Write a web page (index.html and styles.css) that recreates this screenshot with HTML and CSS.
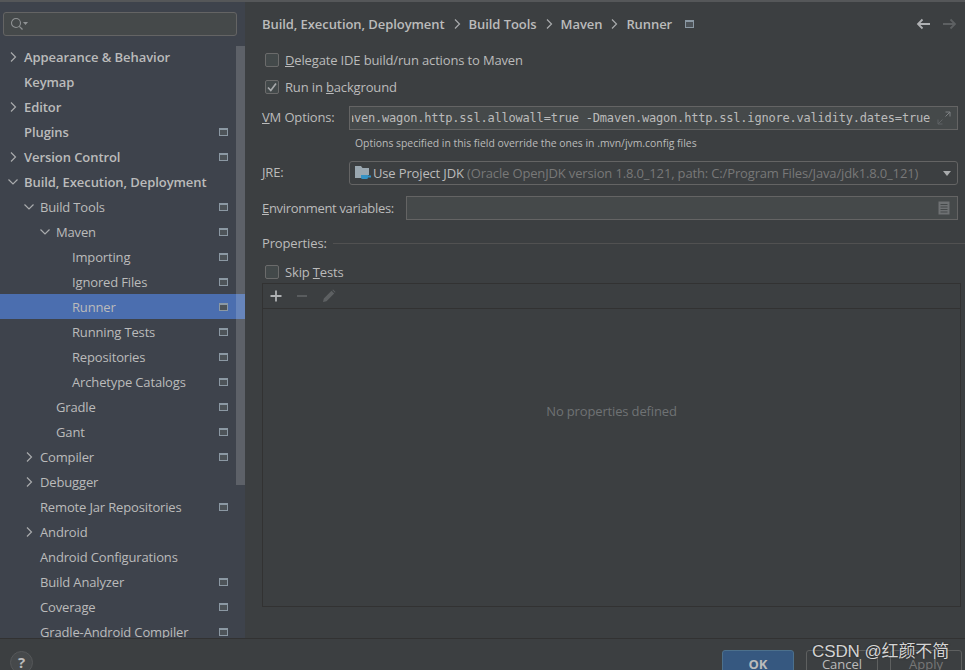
FILE: index.html
```html
<!DOCTYPE html>
<html lang="en">
<head>
    <meta charset="UTF-8">
    <title>Settings</title>
    <link rel="stylesheet" href="styles.css">
</head>
<body>

<svg class="defs" width="0" height="0">
    <symbol id="right" viewBox="0 0 10 12"><path d="M3 1.500 7.500 6 3 10.500" fill="none" stroke="#a9abad" stroke-width="1.200"/></symbol>
    <symbol id="down" viewBox="0 0 12 10"><path d="M1.500 2.500 6 7l4.500-4.500" fill="none" stroke="#a9abad" stroke-width="1.200"/></symbol>
</svg>

<div class="main">
    <div class="sidebar">
        <div class="search">
            <svg width="20" height="16" viewBox="0 0 20 16"><circle cx="7" cy="7" r="4.500" fill="none" stroke="#8f9294" stroke-width="1.100"/><path d="M10.300 10.300 13.500 13.500" stroke="#8f9294" stroke-width="1.200"/><path d="M14 6h5l-2.500 3z" fill="#8f9294"/></svg>
        </div>
        <div class="scrollbar"></div>
        <ul class="tree">
            <li class="row"><svg class="arrow"><use href="#right"/></svg><span class="bold">Appearance &amp; Behavior</span></li>
            <li class="row"><span class="bold">Keymap</span></li>
            <li class="row"><svg class="arrow"><use href="#right"/></svg><span class="bold">Editor</span></li>
            <li class="row"><span class="bold">Plugins</span><i class="proj"></i></li>
            <li class="row"><svg class="arrow"><use href="#right"/></svg><span class="bold">Version Control</span><i class="proj"></i></li>
            <li class="row"><svg class="arrow"><use href="#down"/></svg><span class="bold">Build, Execution, Deployment</span></li>
            <li class="row lv1"><svg class="arrow"><use href="#down"/></svg><span>Build Tools</span><i class="proj"></i></li>
            <li class="row lv2"><svg class="arrow"><use href="#down"/></svg><span>Maven</span><i class="proj"></i></li>
            <li class="row lv3"><span>Importing</span><i class="proj"></i></li>
            <li class="row lv3"><span>Ignored Files</span><i class="proj"></i></li>
            <li class="row lv3 selected"><span>Runner</span><i class="proj"></i></li>
            <li class="row lv3"><span>Running Tests</span><i class="proj"></i></li>
            <li class="row lv3"><span>Repositories</span><i class="proj"></i></li>
            <li class="row lv3"><span>Archetype Catalogs</span><i class="proj"></i></li>
            <li class="row lv2"><span>Gradle</span><i class="proj"></i></li>
            <li class="row lv2"><span>Gant</span><i class="proj"></i></li>
            <li class="row lv1"><svg class="arrow"><use href="#right"/></svg><span>Compiler</span><i class="proj"></i></li>
            <li class="row lv1"><svg class="arrow"><use href="#right"/></svg><span>Debugger</span></li>
            <li class="row lv1"><span>Remote Jar Repositories</span><i class="proj"></i></li>
            <li class="row lv1"><svg class="arrow"><use href="#right"/></svg><span>Android</span></li>
            <li class="row lv1"><span>Android Configurations</span></li>
            <li class="row lv1"><span>Build Analyzer</span><i class="proj"></i></li>
            <li class="row lv1"><span>Coverage</span><i class="proj"></i></li>
            <li class="row lv1"><span>Gradle-Android Compiler</span><i class="proj"></i></li>
        </ul>
    </div>

    <div class="content">
        <div class="crumbs">
            <span>Build, Execution, Deployment</span>
            <svg class="sep"><use href="#right"/></svg>
            <span>Build Tools</span>
            <svg class="sep"><use href="#right"/></svg>
            <span>Maven</span>
            <svg class="sep"><use href="#right"/></svg>
            <span>Runner</span>
            <i class="proj"></i>
            <div class="nav">
                <svg width="14" height="12" viewBox="0 0 14 12"><path d="M14 6H2M6.500 1.500 2 6l4.500 4.500" fill="none" stroke="#afb1b3" stroke-width="1.800"/></svg>
                <svg width="14" height="12" viewBox="0 0 14 12"><path d="M0 6h12M7.500 1.500 12 6l-4.500 4.500" fill="none" stroke="#5d6062" stroke-width="1.800"/></svg>
            </div>
        </div>

        <label class="check first"><i class="box"></i><span><u>D</u>elegate IDE build/run actions to Maven</span></label>
        <label class="check second">
            <i class="box"><svg width="14" height="14" viewBox="0 0 14 14"><path d="M3 7.500 5.800 10.500 11 3.500" fill="none" stroke="#a7a9ab" stroke-width="1.700"/></svg></i>
            <span>Run in <u>b</u>ackground</span>
        </label>

        <div class="field vm">
            <span class="label"><u>V</u>M Options:</span>
            <div class="input mono">
                <span class="clip"><span>-Dmaven.wagon.http.ssl.allowall=true -Dmaven.wagon.http.ssl.ignore.validity.dates=true</span></span>
                <svg width="14" height="14" viewBox="0 0 14 14"><path d="M8.500 1h4.500v4.500M13 1 8.500 5.500" fill="none" stroke="#7e8183" stroke-width="1"/><path d="M5.500 13H1V8.500M1 13l4.500-4.500" fill="none" stroke="#5f6264" stroke-width="1"/></svg>
            </div>
        </div>
        <div class="hint">Options specified in this field override the ones in .mvn/jvm.config files</div>

        <div class="field jre">
            <span class="label"><u>J</u>RE:</span>
            <div class="select">
                <svg width="16" height="16" viewBox="0 0 16 16"><path d="M0 1h6l1.500 2H14v7H9.500v3H0z" fill="#9aa7b0"/><path d="M6 10h7v2.500a1.500 1.500 0 0 1-1.500 1.500h-4A1.500 1.500 0 0 1 6 12.500zM13 10.500h3v2h-3z" fill="#3592c4"/></svg>
                <span class="val">Use Project JDK <em>(Oracle OpenJDK version 1.8.0_121, path: C:/Program Files/Java/jdk1.8.0_121)</em></span>
                <i class="caret"></i>
            </div>
        </div>

        <div class="field env">
            <span class="label"><u>E</u>nvironment variables:</span>
            <div class="input">
                <svg class="doc" width="12" height="14" viewBox="0 0 12 14"><path d="M0.500 0.500h11v13H.5z" fill="#6e7173"/><path d="M2.500 3.500h7M2.500 6h7M2.500 8.500h7M2.500 11h7" stroke="#45494a" stroke-width="1"/></svg>
            </div>
        </div>

        <div class="title"><span>Properties:</span><div class="line"></div></div>

        <label class="check skip"><i class="box"></i><span>Skip <u>T</u>ests</span></label>

        <div class="table">
            <div class="toolbar">
                <svg width="12" height="12" viewBox="0 0 12 12"><path d="M6 .5v11M.5 6h11" stroke="#afb1b3" stroke-width="1.800"/></svg>
                <svg width="12" height="12" viewBox="0 0 12 12"><path d="M1 6h10" stroke="#5d6062" stroke-width="1.800"/></svg>
                <svg width="14" height="14" viewBox="0 0 14 14"><path d="M1 13l.8-3.500L9.500 1.800l2.700 2.700-7.700 7.700zM10.300 1l.8-.5 2.400 2.400-.5.8z" fill="#5d6062"/></svg>
            </div>
            <div class="empty">No properties defined</div>
        </div>
    </div>
</div>

<div class="footer">
    <div class="help">?</div>
    <div class="buttons">
        <button class="btn ok">OK</button>
        <button class="btn">Cancel</button>
        <button class="btn off">Apply</button>
    </div>
</div>

<div class="mark">CSDN @红颜不简</div>

</body>
</html>
```
FILE: styles.css
```css
* {
    box-sizing: border-box;
}
html, body {
    margin: 0;
    height: 670px;
    overflow: hidden;
}
body {
    position: relative;
    background-color: #3c3f41;
    color: #bbbbbb;
    font-family: "Open Sans", "Noto Sans", sans-serif;
    font-size: 13px;
    letter-spacing: -0.15px;
    border-top: 2px solid #555759;
}
.defs {
    position: absolute;
}
.main {
    display: flex;
    height: 637px;
    border-bottom: 1px solid #323232;
}

/* left tree */
.sidebar {
    position: relative;
    width: 245px;
    flex: none;
    background-color: #3e434c;
    overflow: hidden;
}
.search {
    display: flex;
    align-items: center;
    margin: 10px 8px 8px 3px;
    height: 24px;
    padding-left: 5px;
    background-color: #45494a;
    border: 1px solid #646464;
    border-radius: 3px;
}
.scrollbar {
    position: absolute;
    left: 236px;
    top: 44px;
    z-index: 1;
    width: 9px;
    height: 439px;
    background-color: rgba(255,255,255,0.16);
}
.tree {
    list-style: none;
    margin: 0;
    padding: 0;
}
.row {
    display: flex;
    align-items: center;
    height: 25px;
    padding: 0 17px 0 24px;
    position: relative;
    white-space: nowrap;
}
.row .proj {
    margin-left: auto;
}
.lv1 { padding-left: 40px; }
.lv2 { padding-left: 56px; }
.lv3 { padding-left: 72px; }
.bold {
    font-weight: 600;
    letter-spacing: -0.07px;
}
.arrow {
    position: absolute;
    width: 12px;
    height: 12px;
    margin-left: -17px;
}
.selected {
    background-color: #4b6eaf;
}
.proj {
    display: block;
    width: 9px;
    height: 8px;
    flex: none;
    border: 1px solid #8b98a3;
    border-top-width: 2px;
    background-color: #4d5358;
}

/* right panel */
.content {
    flex: 1;
    padding: 0 7px 0 17px;
    min-width: 0;
    position: relative;
}
.crumbs {
    display: flex;
    align-items: center;
    height: 24px;
    margin-top: 10px;
    font-weight: 600;
    letter-spacing: -0.07px;
    white-space: nowrap;
}
.sep {
    width: 12px;
    height: 12px;
    margin: 0 6px;
}
.crumbs .proj {
    margin-left: 13px;
}
.nav {
    display: flex;
    gap: 13px;
    margin-left: auto;
    margin-right: 1px;
}
.check {
    display: flex;
    align-items: center;
    height: 22px;
    margin-left: 3px;
    gap: 6px;
}
.check.first {
    margin-top: 13px;
}
.check.second {
    margin-top: 5px;
}
.box {
    display: flex;
    width: 14px;
    height: 14px;
    background-color: #43494a;
    border: 1px solid #6b6b6b;
    border-radius: 2px;
    align-items: center;
    justify-content: center;
}
.box svg {
    flex: none;
}
.field {
    display: flex;
    align-items: center;
    height: 24px;
}
.field.vm {
    margin-top: 8px;
}
.field.jre {
    margin-top: 10px;
}
.field.env {
    margin-top: 11px;
}
.label {
    width: 87px;
    flex: none;
    padding-bottom: 2px;
}
.env .label {
    width: 144px;
    padding-bottom: 0;
    letter-spacing: -0.33px;
}
.input, .select {
    flex: 1;
    min-width: 0;
    height: 24px;
    display: flex;
    align-items: center;
    background-color: #45494a;
    border: 1px solid #646464;
}
.select {
    background-color: #3c3f41;
    border-radius: 3px;
    padding-left: 5px;
}
.mono {
    font-family: "DejaVu Sans Mono", monospace;
    font-size: 12px;
    letter-spacing: -0.2px;
    padding: 0 6px 0 2px;
}
.clip {
    flex: 1;
    min-width: 0;
    display: flex;
    justify-content: flex-end;
    overflow: hidden;
    white-space: nowrap;
    margin-right: 7px;
}
.clip span {
    flex: none;
}
.hint {
    font-size: 10.4px;
    letter-spacing: 0;
    line-height: 15px;
    margin: 6px 0 0 93px;
}
.val {
    margin-left: 2px;
    white-space: nowrap;
}
.val em {
    font-style: normal;
    color: #787878;
}
.caret {
    margin-left: auto;
    margin-right: 6px;
    width: 0;
    height: 0;
    border-left: 4.5px solid transparent;
    border-right: 4.5px solid transparent;
    border-top: 5px solid #a9abad;
}
.doc {
    margin-left: auto;
    margin-right: 7px;
}
.title {
    display: flex;
    align-items: center;
    gap: 6px;
    margin-top: 14px;
    height: 18px;
    margin-right: -7px;
}
.line {
    flex: 1;
    height: 1px;
    background-color: #515151;
}
.check.skip {
    margin-top: 9px;
}
.table {
    margin: 0 -3px 0 0;
    height: 324px;
    border: 1px solid #323232;
    display: flex;
    flex-direction: column;
}
.toolbar {
    display: flex;
    align-items: center;
    gap: 14px;
    height: 25px;
    flex: none;
    padding-left: 7px;
    border-bottom: 1px solid #323232;
}
.empty {
    flex: 1;
    display: flex;
    align-items: center;
    justify-content: center;
    color: #6f7274;
    padding-bottom: 94px;
}

/* bottom buttons */
.footer {
    display: flex;
    align-items: flex-start;
    justify-content: space-between;
    height: 31px;
    padding: 11px 3px 0 10px;
}
.help {
    width: 23px;
    height: 23px;
    flex: none;
    margin-top: 1px;
    border-radius: 50%;
    background-color: #46494b;
    border: 1px solid #555759;
    color: #bbbbbb;
    font-weight: 700;
    font-size: 15px;
    line-height: 21px;
    text-align: center;
}
.buttons {
    display: flex;
    gap: 12px;
}
.btn {
    width: 72px;
    height: 28px;
    padding: 0;
    font-family: inherit;
    font-size: 13px;
    color: #bbbbbb;
    background-color: #3c3f41;
    border: 1px solid #5e6060;
    border-radius: 3px;
}
.ok {
    background-color: #365880;
    border-color: #4c708c;
    font-weight: 700;
}
.off {
    color: #777777;
}
.mark {
    position: absolute;
    left: 812px;
    top: 639px;
    font-family: "Liberation Sans", "Noto Sans CJK SC", sans-serif;
    font-size: 17px;
    letter-spacing: -0.1px;
    line-height: 22px;
    color: #d4d4d4;
    text-shadow: 0 0 2px #222222;
    white-space: nowrap;
}
```
